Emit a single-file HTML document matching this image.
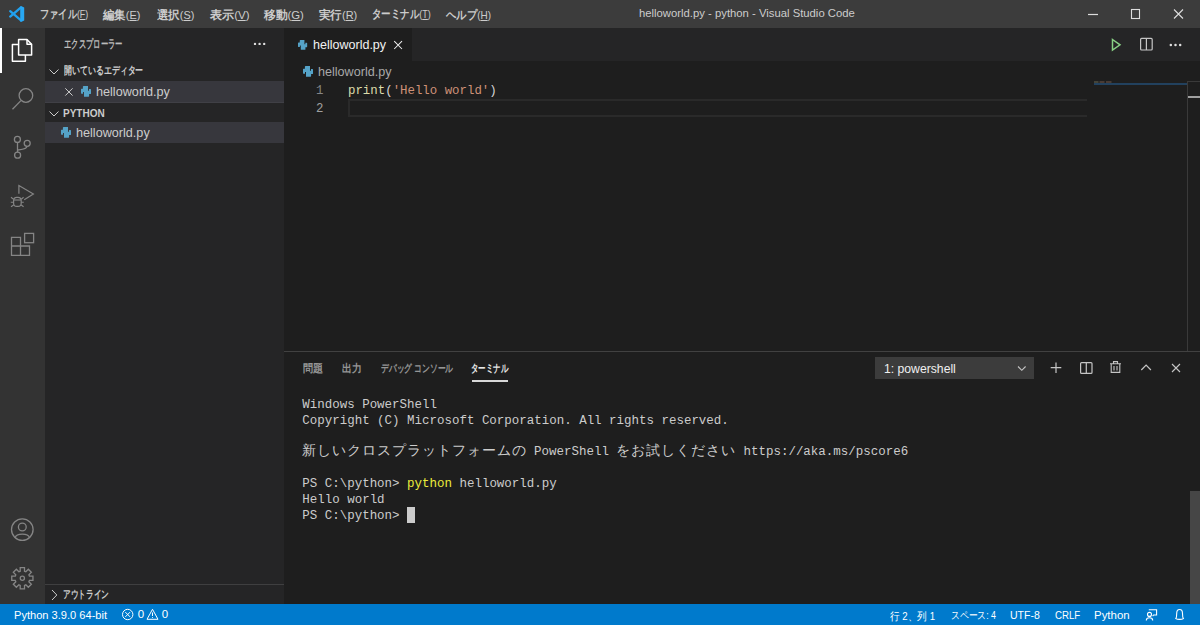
<!DOCTYPE html><html><head><meta charset="utf-8"><style>
*{margin:0;padding:0;box-sizing:border-box}
html,body{width:1200px;height:625px;overflow:hidden;background:#1e1e1e;font-family:"Liberation Sans",sans-serif;color:#ccc}
.a{position:absolute;white-space:nowrap}
.t{position:absolute;white-space:nowrap;transform-origin:0 0}
svg{position:absolute;overflow:visible}
#title{left:0;top:0;width:1200px;height:28px;background:#3c3c3c}
#act{left:0;top:28px;width:45px;height:576px;background:#333333}
#side{left:45px;top:28px;width:239px;height:576px;background:#252526}
#tabs{left:284px;top:28px;width:916px;height:33px;background:#252526}
#tab1{left:284px;top:28px;width:128px;height:33px;background:#1e1e1e}
#panel{left:284px;top:351px;width:916px;height:253px;background:#1e1e1e;border-top:1px solid #414141}
#status{left:0;top:604px;width:1200px;height:21px;background:#007acc}
.term{left:302.3px;font-size:12.47px;line-height:16px;color:#cccccc;font-family:"Liberation Mono",monospace}
.w{display:inline-block;width:14.96px;font-size:13.6px;text-align:left}
.row{left:45px;width:239px;height:21px;background:#37373d}
u{text-decoration:underline}
b{font-weight:bold}
</style></head><body>
<div class="a" id="title"></div><div class="a" id="act"></div><div class="a" id="side"></div><div class="a" id="tabs"></div><div class="a" id="tab1"></div><div class="a" id="panel"></div><div class="a" id="status"></div>
<svg style="left:0;top:0" width="30" height="28">
<g stroke="#21a0ee" stroke-width="2.3" stroke-linecap="round">
<path d="M10.2 11.2 L21 20.4"/>
<path d="M10.2 16.6 L21 7.4"/>
</g>
<path d="M20.2 6.4 Q20.8 6 21.5 6.3 L24.2 7.6 V20.4 L21.5 21.7 Q20.8 22 20.2 21.6 Z" fill="#28a8f4"/>
</svg>
<div class="t" style="left:39.83px;top:6.50px;font-size:11.5px;line-height:14px;color:#cccccc;transform:scaleX(0.7689)"><b>ファイル</b>(<u>F</u>)</div>
<div class="t" style="left:103.00px;top:7.50px;font-size:11.5px;line-height:14px;color:#cccccc;transform:scaleX(0.9487)"><b>編集</b>(<u>E</u>)</div>
<div class="t" style="left:156.70px;top:7.50px;font-size:11.5px;line-height:14px;color:#cccccc;transform:scaleX(0.9500)"><b>選択</b>(<u>S</u>)</div>
<div class="t" style="left:209.50px;top:7.50px;font-size:11.5px;line-height:14px;color:#cccccc;transform:scaleX(1.0064)"><b>表示</b>(<u>V</u>)</div>
<div class="t" style="left:263.75px;top:7.50px;font-size:11.5px;line-height:14px;color:#cccccc;transform:scaleX(0.9812)"><b>移動</b>(<u>G</u>)</div>
<div class="t" style="left:318.75px;top:7.50px;font-size:11.5px;line-height:14px;color:#cccccc;transform:scaleX(0.9563)"><b>実行</b>(<u>R</u>)</div>
<div class="t" style="left:371.71px;top:6.50px;font-size:11.5px;line-height:14px;color:#cccccc;transform:scaleX(0.7877)"><b>ターミナル</b>(<u>T</u>)</div>
<div class="t" style="left:446.25px;top:7.50px;font-size:11.5px;line-height:14px;color:#cccccc;transform:scaleX(0.8654)"><b>ヘルプ</b>(<u>H</u>)</div>
<div class="t" style="left:639.00px;top:6.00px;font-size:11.3px;line-height:14px;color:#cccccc;transform:scaleX(1.0000)">helloworld.py - python - Visual Studio Code</div>
<svg style="left:0;top:0" width="1200" height="28">
<path d="M1088 14.5 H1098" stroke="#ddd" stroke-width="1.2"/>
<rect x="1131.5" y="9.5" width="8" height="9" fill="none" stroke="#ddd" stroke-width="1.1"/>
<path d="M1174 9.5 L1183 18.5 M1183 9.5 L1174 18.5" stroke="#ddd" stroke-width="1.1"/>
</svg>
<div class="a" style="left:0;top:28px;width:2px;height:45px;background:#fff"></div>
<svg style="left:0;top:28px" width="45" height="576" viewBox="0 28 45 576">
<g fill="none" stroke="#ffffff" stroke-width="1.5" stroke-linejoin="round">
<path d="M18.6 39.6 H27 L31.6 44.2 V55 H18.6 Z"/>
<path d="M27 39.6 V44.2 H31.6" />
<path d="M18.6 44.6 H12.4 V61.2 H25.4 V55"/>
</g>
<g fill="none" stroke="#858585" stroke-width="1.3">
<circle cx="25.9" cy="95.5" r="6.8"/>
<path d="M20.9 100.6 L12.5 109.2"/>
<circle cx="17.4" cy="139.4" r="3"/>
<circle cx="17.6" cy="155.2" r="3"/>
<circle cx="27.2" cy="143.3" r="3"/>
<path d="M17.5 142.4 V152.2 M27 146.3 C27 149.3 22 149.5 17.6 150"/>
<path d="M18.9 193.8 V185.6 L33.4 194 L24.2 199.8" stroke-width="1.2"/>
<rect x="13.6" y="197.4" width="7.6" height="9" rx="3.2" stroke-width="1.2"/>
<path d="M13.8 200 H21" stroke-width="1.1"/>
<path d="M11 197.3 L13.6 199.2 M23.6 197.3 L21.2 199.2 M10.8 202.3 H13.6 M21.2 202.3 H23.8 M11 206.8 L13.6 205 M23.6 206.8 L21.2 205" stroke-width="1.1"/>
<path d="M11.5 237.3 H20.5 V246 H29.5 V255.3 H11.5 Z M11.5 246 H20.5 V255.3"/>
<rect x="24.6" y="233.4" width="9" height="9.3"/>
<circle cx="22.3" cy="529.6" r="10.8"/>
<circle cx="22.3" cy="527" r="3.9"/>
<path d="M15 537.8 C16.5 532.8 28.1 532.8 29.6 537.8"/>
<circle cx="22.35" cy="578.3" r="2.1"/>
<path d="M20.20 571.22 L20.20 567.70 L24.50 567.70 L24.50 571.22 L25.84 571.77 L28.33 569.28 L31.37 572.32 L28.88 574.81 L29.43 576.15 L32.95 576.15 L32.95 580.45 L29.43 580.45 L28.88 581.79 L31.37 584.28 L28.33 587.32 L25.84 584.83 L24.50 585.38 L24.50 588.90 L20.20 588.90 L20.20 585.38 L18.86 584.83 L16.37 587.32 L13.33 584.28 L15.82 581.79 L15.27 580.45 L11.75 580.45 L11.75 576.15 L15.27 576.15 L15.82 574.81 L13.33 572.32 L16.37 569.28 L18.86 571.77 Z"/>
</g>
</svg>
<div class="t" style="left:63.50px;top:37.45px;font-size:11.5px;line-height:14px;font-weight:bold;color:#bbbbbb;transform:scaleX(0.6105)">エクスプローラー</div>
<svg style="left:250px;top:42px" width="20" height="6"><circle cx="5" cy="1.9" r="1.2" fill="#e0e0e0"/><circle cx="9.6" cy="1.9" r="1.2" fill="#e0e0e0"/><circle cx="14.2" cy="1.9" r="1.2" fill="#e0e0e0"/></svg>
<svg style="left:45px;top:60px" width="20" height="20"><path d="M4.5 9.5 L9 14 L13.5 9.5" fill="none" stroke="#cccccc" stroke-width="1"/></svg>
<div class="t" style="left:63.80px;top:63.45px;font-size:11px;line-height:14px;font-weight:bold;color:#cccccc;transform:scaleX(0.7218)">開いているエディター</div>
<div class="a row" style="top:81px;height:21.7px"></div><div class="a" style="left:45px;top:101.7px;width:239px;height:1px;background:#404046"></div>
<svg style="left:65px;top:87.7px" width="10" height="10"><path d="M0.3 0.3 L7.6 7.6 M7.6 0.3 L0.3 7.6" stroke="#cccccc" stroke-width="1"/></svg>
<svg style="left:81px;top:86.3px" width="10.0" height="10.7" viewBox="0 0 10 10.7"><path d="M2.5 0 H7 V4.7 H8 V3 H9.5 Q10 3 10 3.5 V7.5 Q10 8 9.5 8 H8.1 V10.1 Q8.1 10.7 7.5 10.7 H3 V6 H2 V7.7 H0.5 Q0 7.7 0 7.2 V3.2 Q0 2.7 0.5 2.7 H1.9 V0.6 Z" fill="#55a3c8"/></svg>
<div class="t" style="left:95.77px;top:83.50px;font-size:12.3px;line-height:16px;color:#cccccc;transform:scaleX(1.0282)">helloworld.py</div>
<svg style="left:45px;top:102px" width="20" height="20"><path d="M4.5 9.5 L9 14 L13.5 9.5" fill="none" stroke="#cccccc" stroke-width="1"/></svg>
<div class="t" style="left:63.20px;top:106.60px;font-size:10.2px;line-height:14px;font-weight:bold;color:#cccccc;transform:scaleX(0.9833)">PYTHON</div>
<div class="a row" style="top:121.7px;height:21.2px"></div>
<svg style="left:60.5px;top:127.2px" width="10.0" height="10.7" viewBox="0 0 10 10.7"><path d="M2.5 0 H7 V4.7 H8 V3 H9.5 Q10 3 10 3.5 V7.5 Q10 8 9.5 8 H8.1 V10.1 Q8.1 10.7 7.5 10.7 H3 V6 H2 V7.7 H0.5 Q0 7.7 0 7.2 V3.2 Q0 2.7 0.5 2.7 H1.9 V0.6 Z" fill="#55a3c8"/></svg>
<div class="t" style="left:75.67px;top:124.50px;font-size:12.3px;line-height:16px;color:#cccccc;transform:scaleX(1.0268)">helloworld.py</div>
<div class="a" style="left:45px;top:584px;width:239px;height:1px;background:#3f3f40"></div>
<svg style="left:45px;top:585px" width="20" height="19"><path d="M7 5 L11.8 10 L7 15" fill="none" stroke="#cccccc" stroke-width="1"/></svg>
<div class="t" style="left:63.05px;top:587.20px;font-size:11px;line-height:14px;font-weight:bold;color:#cccccc;transform:scaleX(0.6962)">アウトライン</div>
<svg style="left:298px;top:39.8px" width="9.2" height="9.8" viewBox="0 0 10 10.7"><path d="M2.5 0 H7 V4.7 H8 V3 H9.5 Q10 3 10 3.5 V7.5 Q10 8 9.5 8 H8.1 V10.1 Q8.1 10.7 7.5 10.7 H3 V6 H2 V7.7 H0.5 Q0 7.7 0 7.2 V3.2 Q0 2.7 0.5 2.7 H1.9 V0.6 Z" fill="#55a3c8"/></svg>
<div class="t" style="left:313.18px;top:37.00px;font-size:12.3px;line-height:16px;color:#f2f2f2;transform:scaleX(1.0183)">helloworld.py</div>
<svg style="left:394px;top:41px" width="10" height="10"><path d="M0.2 0.2 L8 8 M8 0.2 L0.2 8" stroke="#f0f0f0" stroke-width="1.05"/></svg>
<svg style="left:0;top:0" width="1200" height="61">
<path d="M1112.5 39.5 L1120 44.8 L1112.5 50 Z" fill="none" stroke="#89d185" stroke-width="1.5" stroke-linejoin="miter"/>
<rect x="1140.6" y="38.4" width="11.6" height="11.6" rx="1" fill="none" stroke="#c5c5c5" stroke-width="1.2"/>
<path d="M1146.4 38.4 V50" stroke="#c5c5c5" stroke-width="1.2"/>
<circle cx="1170.8" cy="45" r="1.25" fill="#e0e0e0"/><circle cx="1175.5" cy="45" r="1.25" fill="#e0e0e0"/><circle cx="1180.2" cy="45" r="1.25" fill="#e0e0e0"/>
</svg>
<svg style="left:303.1px;top:66px" width="10.0" height="10.7" viewBox="0 0 10 10.7"><path d="M2.5 0 H7 V4.7 H8 V3 H9.5 Q10 3 10 3.5 V7.5 Q10 8 9.5 8 H8.1 V10.1 Q8.1 10.7 7.5 10.7 H3 V6 H2 V7.7 H0.5 Q0 7.7 0 7.2 V3.2 Q0 2.7 0.5 2.7 H1.9 V0.6 Z" fill="#55a3c8"/></svg>
<div class="t" style="left:318.47px;top:63.50px;font-size:12.2px;line-height:16px;color:#a9a9a9;transform:scaleX(1.0329)">helloworld.py</div>
<div class="a" style="left:316px;top:82px;font-family:'Liberation Mono',monospace;font-size:12.4px;line-height:18px;color:#858585">1</div>
<div class="a" style="left:316px;top:99.5px;font-family:'Liberation Mono',monospace;font-size:12.4px;line-height:18px;color:#a0a0a0">2</div>
<div class="a" style="left:348px;top:99px;width:739px;height:18px;border:2px solid #2a2a2a;border-right:none"></div>
<div class="a" style="left:348px;top:82px;font-family:'Liberation Mono',monospace;font-size:12.4px;line-height:18px;color:#d4d4d4"><span style="color:#dcdcaa">print</span>(<span style="color:#ce9178">'Hello world'</span>)</div>
<div class="a" style="left:1094px;top:83px;width:93px;height:2px;background:#22415e"></div>
<svg style="left:1094px;top:81px" width="20" height="2"><rect x="0" y="0.5" width="4.5" height="1" fill="#6a6a55"/><rect x="5.5" y="0.5" width="5" height="1" fill="#75584a"/><rect x="12" y="0.5" width="5.5" height="1" fill="#75584a"/></svg>
<div class="a" style="left:1187px;top:81px;width:1px;height:270px;background:#3a3a3a"></div>
<div class="a" style="left:1187px;top:81px;width:13px;height:1px;background:#3a3a3a"></div>
<div class="a" style="left:1188px;top:96px;width:12px;height:2px;background:#a0a0a0"></div>
<div class="t" style="left:302.70px;top:361.20px;font-size:11px;line-height:14px;font-weight:bold;color:rgba(231,231,231,0.6);transform:scaleX(0.9182)">問題</div>
<div class="t" style="left:342.30px;top:361.20px;font-size:11px;line-height:14px;font-weight:bold;color:rgba(231,231,231,0.6);transform:scaleX(0.8905)">出力</div>
<div class="t" style="left:381.20px;top:361.05px;font-size:11px;line-height:14px;font-weight:bold;color:rgba(231,231,231,0.6);transform:scaleX(0.7059)">デバッグ コンソール</div>
<div class="t" style="left:470.82px;top:360.75px;font-size:11px;line-height:14px;font-weight:bold;color:#e7e7e7;transform:scaleX(0.6796)">ターミナル</div>
<div class="a" style="left:472px;top:380px;width:36px;height:2px;background:#d8d8d8"></div>
<div class="a" style="left:875px;top:357px;width:159px;height:22px;background:#3c3c3c"></div>
<div class="t" style="left:883.88px;top:362.00px;font-size:12px;line-height:14px;color:#f0f0f0;transform:scaleX(1.0159)">1: powershell</div>
<svg style="left:0;top:0" width="1200" height="400">
<path d="M1018 366.5 L1021.8 370.3 L1025.6 366.5" fill="none" stroke="#c5c5c5" stroke-width="1.1"/>
<path d="M1056 362.5 V373 M1050.7 367.7 H1061.3" stroke="#c5c5c5" stroke-width="1.2"/>
<rect x="1080.6" y="362.6" width="11.4" height="10.8" rx="1" fill="none" stroke="#c5c5c5" stroke-width="1.2"/>
<path d="M1086.3 362.6 V373.4" stroke="#c5c5c5" stroke-width="1.2"/>
<path d="M1110 363.8 H1121 M1113.5 363.8 V361.6 H1117.5 V363.8 M1111.2 363.8 V372.4 H1119.8 V363.8 M1114 366 V370.5 M1117 366 V370.5" fill="none" stroke="#c5c5c5" stroke-width="1.1"/>
<path d="M1141.3 370 L1146.1 365 L1150.9 370" fill="none" stroke="#c5c5c5" stroke-width="1.2"/>
<path d="M1172 364 L1180 372 M1180 364 L1172 372" stroke="#c5c5c5" stroke-width="1.1"/>
</svg>
<div class="a term" style="top:397px">Windows PowerShell</div>
<div class="a term" style="top:413px">Copyright (C) Microsoft Corporation. All rights reserved.</div>
<div class="a term" style="top:444px"><span class="w">新</span><span class="w">し</span><span class="w">い</span><span class="w">ク</span><span class="w">ロ</span><span class="w">ス</span><span class="w">プ</span><span class="w">ラ</span><span class="w">ッ</span><span class="w">ト</span><span class="w">フ</span><span class="w">ォ</span><span class="w">ー</span><span class="w">ム</span><span class="w">の</span> PowerShell <span class="w">を</span><span class="w">お</span><span class="w">試</span><span class="w">し</span><span class="w">く</span><span class="w">だ</span><span class="w">さ</span><span class="w">い</span> https://aka.ms/pscore6</div>
<div class="a term" style="top:492px">Hello world</div>
<div class="a term" style="top:508px">PS C:\python&gt; </div>
<div class="a term" style="top:476px">PS C:\python&gt; <span style="color:#ecec3c">python</span> helloworld.py</div>
<div class="a" style="left:407px;top:507px;width:8px;height:16px;background:#cccccc"></div>
<div class="a" style="left:1190px;top:491px;width:10px;height:113px;background:#464646"></div>
<div class="t" style="left:137.80px;top:607.30px;font-size:11.5px;line-height:14px;color:#ffffff;transform:scaleX(1.0000)">0</div>
<div class="t" style="left:161.80px;top:607.30px;font-size:11.5px;line-height:14px;color:#ffffff;transform:scaleX(1.0000)">0</div>
<div class="t" style="left:13.69px;top:607.50px;font-size:11px;line-height:14px;color:#ffffff;transform:scaleX(1.0077)">Python 3.9.0 64-bit</div>
<div class="t" style="left:890.00px;top:608.50px;font-size:11px;line-height:14px;color:#ffffff;transform:scaleX(0.8765)">行 2、列 1</div>
<div class="t" style="left:950.50px;top:607.50px;font-size:11px;line-height:14px;color:#ffffff;transform:scaleX(0.8000)">スペース: 4</div>
<div class="t" style="left:1010.34px;top:607.50px;font-size:11px;line-height:14px;color:#ffffff;transform:scaleX(0.9567)">UTF-8</div>
<div class="t" style="left:1054.70px;top:607.50px;font-size:11px;line-height:14px;color:#ffffff;transform:scaleX(0.8786)">CRLF</div>
<div class="t" style="left:1093.66px;top:607.50px;font-size:11px;line-height:14px;color:#ffffff;transform:scaleX(1.0394)">Python</div>
<svg style="left:0;top:604px" width="1200" height="21" viewBox="0 604 1200 21">
<g fill="none" stroke="#fff" stroke-width="1">
<circle cx="127.7" cy="614.5" r="5.2"/>
<path d="M125.3 612.1 L130.1 616.9 M130.1 612.1 L125.3 616.9"/>
<path d="M152.5 609.3 L158 619.3 H147 Z"/>
<path d="M152.5 612.5 V616 M152.5 617.2 V618"/>
<path d="M1148.8 609.8 H1156.6 V615 H1153.6 L1152.6 616.2" stroke-width="1.1"/>
<circle cx="1149.5" cy="614.4" r="2" stroke-width="1.1"/>
<path d="M1146.3 620.4 C1146.3 616.9 1152.7 616.9 1152.7 620.4" stroke-width="1.1"/>
<path d="M1175.8 618.6 C1176.6 617.4 1176.7 616 1176.7 613.4 C1176.7 610.6 1178 609.5 1179.6 609.5 C1181.2 609.5 1182.5 610.6 1182.5 613.4 C1182.5 616 1182.6 617.4 1183.4 618.6 C1181.8 619.6 1177.4 619.6 1175.8 618.6 Z" stroke-width="1.1"/>
</g>
</svg>
</body></html>
